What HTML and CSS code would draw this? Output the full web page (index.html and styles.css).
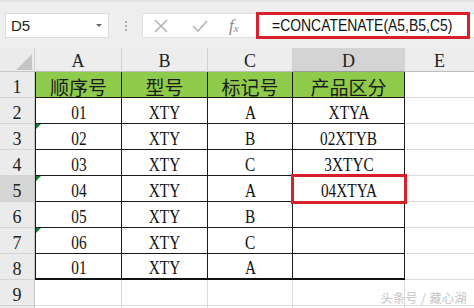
FILE: index.html
```html
<!DOCTYPE html>
<html lang="zh">
<head>
<meta charset="utf-8">
<link rel="stylesheet" href="styles.css">
</head>
<body>
<div class="app">
  <div class="toolbar">
    <div class="namebox"><span class="nb-text">D5</span><span class="nb-arrow"></span></div>
    <div class="dots"><i></i><i></i><i></i></div>
    <div class="fbar">
      <svg class="ico x" width="16" height="16" viewBox="0 0 16 16"><path d="M2 2L14 14M14 2L2 14" stroke="#b4b4b4" stroke-width="1.6" fill="none"/></svg>
      <svg class="ico ok" width="18" height="16" viewBox="0 0 18 16"><path d="M2 8L7 13L16 3" stroke="#b4b4b4" stroke-width="1.6" fill="none"/></svg>
      <span class="fx">f<sub>x</sub></span>
      <div class="formula"><span class="ftext">=CONCATENATE(A5,B5,C5)</span></div>
    </div>
  </div>
  <div class="sheet">
    <div class="corner"><svg width="35" height="24" viewBox="0 0 35 24"><path d="M32 6L32 22L16 22Z" fill="#c4c4c4"/></svg></div>
    <div class="ch">A</div><div class="ch">B</div><div class="ch">C</div><div class="ch sel">D</div><div class="ch last">E</div>

    <div class="rh">1</div>
    <div class="c t g a cjk">顺序号</div><div class="c t g cjk">型号</div><div class="c t g cjk">标记号</div><div class="c t g cjk">产品区分</div><div class="c e"></div>

    <div class="rh">2</div>
    <div class="c t a"><span class="n">01</span></div><div class="c t"><span class="n">XTY</span></div><div class="c t"><span class="n">A</span></div><div class="c t"><span class="n">XTYA</span></div><div class="c e"></div>

    <div class="rh">3</div>
    <div class="c t a tri"><span class="n">02</span></div><div class="c t"><span class="n">XTY</span></div><div class="c t"><span class="n">B</span></div><div class="c t"><span class="n">02XTYB</span></div><div class="c e"></div>

    <div class="rh">4</div>
    <div class="c t a"><span class="n">03</span></div><div class="c t"><span class="n">XTY</span></div><div class="c t"><span class="n">C</span></div><div class="c t"><span class="n">3XTYC</span></div><div class="c e"></div>

    <div class="rh sel">5</div>
    <div class="c t a tri"><span class="n">04</span></div><div class="c t"><span class="n">XTY</span></div><div class="c t"><span class="n">A</span></div><div class="c t active"><span class="n">04XTYA</span></div><div class="c e"></div>

    <div class="rh">6</div>
    <div class="c t a"><span class="n">05</span></div><div class="c t"><span class="n">XTY</span></div><div class="c t"><span class="n">B</span></div><div class="c t"></div><div class="c e"></div>

    <div class="rh">7</div>
    <div class="c t a tri"><span class="n">06</span></div><div class="c t"><span class="n">XTY</span></div><div class="c t"><span class="n">C</span></div><div class="c t"></div><div class="c e"></div>

    <div class="rh">8</div>
    <div class="c t a b"><span class="n">01</span></div><div class="c t b"><span class="n">XTY</span></div><div class="c t b"><span class="n">A</span></div><div class="c t b"></div><div class="c e"></div>

    <div class="rh">9</div>
    <div class="c"></div><div class="c"></div><div class="c"></div><div class="c"></div><div class="c e"></div>

    <div class="rh"></div>
    <div class="c"></div><div class="c"></div><div class="c"></div><div class="c"></div><div class="c e"></div>

    <div class="watermark">头条号 / 藏心湖</div>
  </div>
</div>
</body>
</html>
```

FILE: styles.css
```css
* { box-sizing: border-box; }
html, body { margin: 0; padding: 0; }
body {
  width: 474px;
  height: 308px;
  overflow: hidden;
  background: #fff;
  font-family: "Liberation Serif", "Noto Sans CJK SC", serif;
}
.app { width: 474px; height: 308px; overflow: hidden; }

.toolbar {
  height: 48px;
  background: #eeeeee;
  border-top: 2px solid #e2e2e2;
  display: flex;
  align-items: flex-start;
  padding: 11px 0 0 5px;
}
.namebox {
  width: 104px;
  height: 25px;
  background: #fff;
  border: 1px solid #dcdcdc;
  display: flex;
  align-items: center;
  justify-content: space-between;
  padding: 0 6px 0 5px;
  font-family: "Liberation Sans", Arial, sans-serif;
  font-size: 15px;
  color: #222;
}
.nb-arrow {
  width: 0; height: 0;
  border-left: 3px solid transparent;
  border-right: 3px solid transparent;
  border-top: 3px solid #666;
}
.dots {
  width: 33px;
  height: 25px;
  display: flex;
  flex-direction: column;
  align-items: center;
  justify-content: center;
  gap: 2px;
}
.dots i { display: block; width: 2px; height: 2px; background: #b0b0b0; }
.fbar {
  flex: 1;
  height: 25px;
  background: #fff;
  border: 1px solid #e0e0e0;
  border-right: none;
  display: flex;
  align-items: center;
  padding-left: 10px;
}
.ico { display: block; }
.ico.x { margin-right: 22px; }
.ico.ok { margin-right: 20px; }
.fx {
  font-family: "Liberation Serif", serif;
  font-style: italic;
  font-size: 17px;
  color: #8a8a8a;
  width: 27px;
  line-height: 1;
}
.fx sub { font-size: 11px; vertical-align: -1px; }
.formula {
  width: 214px;
  height: 27px;
  border: 3px solid #d7202a;
  background: #fff;
  display: flex;
  align-items: center;
  padding-left: 13px;
  font-family: "Liberation Sans", Arial, sans-serif;
  font-size: 17px;
  color: #111;
  white-space: nowrap;
}
.ftext { display: inline-block; transform: scaleX(0.82); transform-origin: left center; }

.sheet {
  position: relative;
  height: 260px;
  overflow: hidden;
  display: grid;
  grid-template-columns: 35px 87px 86px 85px 112px 69px;
  grid-template-rows: 24px repeat(10, 26px);
}
.corner {
  background: #ebebeb;
  border-right: 1px solid #d0d0d0;
  border-bottom: 1px solid #c6c6c6;
}
.corner svg { display: block; }
.ch {
  background: #ededed;
  border-right: 1px solid #d0d0d0;
  border-bottom: 1px solid #bdbdbd;
  display: flex;
  align-items: flex-end;
  justify-content: center;
  font-size: 18px;
  line-height: 20px;
  color: #222;
}
.ch.sel { background: #d4d4d4; border-bottom-color: #9a9a9a; }
.ch.last { border-right: none; }
.rh {
  background: #ebebeb;
  border-right: 1px solid #c6c6c6;
  border-bottom: 1px solid #d4d4d4;
  display: flex;
  align-items: flex-end;
  justify-content: center;
  font-size: 18px;
  line-height: 20px;
  color: #222;
}
.rh.sel { background: #d6d6d6; }

.c {
  border-right: 1px solid #dadada;
  border-bottom: 1px solid #dadada;
  display: flex;
  align-items: flex-end;
  justify-content: center;
  font-size: 18px;
  line-height: 20px;
  color: #111;
  position: relative;
}
.c.e { border-right: none; }
.c.t { border-right-color: #1a1a1a; border-bottom-color: #1a1a1a; }
.c.a { border-left: 1px solid #1a1a1a; }
.c.g { background: #8fcb4a; }
.c.b { border-bottom: 2px solid #111; }
.cjk {
  font-family: "Noto Sans CJK SC", sans-serif;
  font-size: 19px;
  color: #1a1a1a;
}
.n { display: inline-block; transform: scaleX(0.85); }
.tri::before {
  content: "";
  position: absolute;
  left: 0;
  top: 0;
  border-top: 5px solid #1f7a34;
  border-right: 5px solid transparent;
}
.active {
  outline: 3px solid #d7202a;
  outline-offset: -1px;
  z-index: 1;
}
.watermark {
  position: absolute;
  right: 7px;
  bottom: 3px;
  font-family: "Noto Sans CJK SC", sans-serif;
  font-size: 12px;
  line-height: 14px;
  color: #c4c4c4;
  letter-spacing: 0.5px;
}
```
